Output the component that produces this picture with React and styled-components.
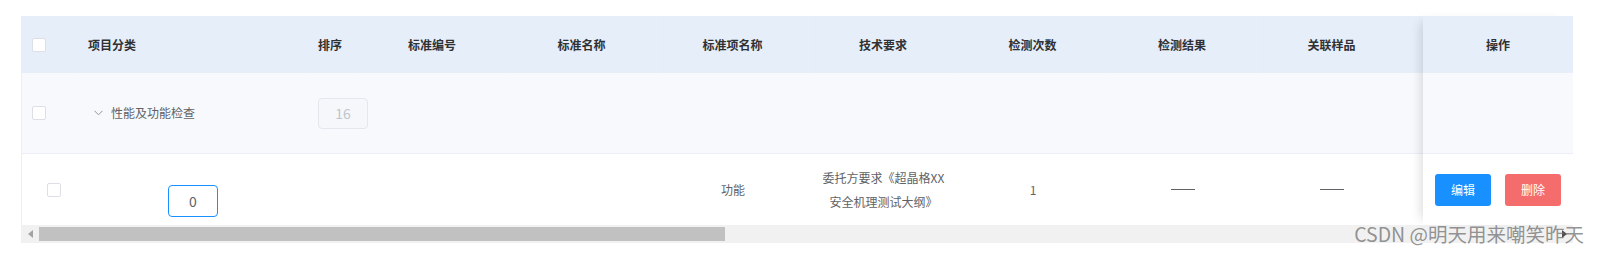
import React from "react";
import styled, { createGlobalStyle } from "styled-components";

const Global = createGlobalStyle`
  html, body { margin: 0; padding: 0; background: #fff; }
  body { font-family: "Noto Sans CJK SC", "Noto Sans", sans-serif; }
  * { box-sizing: border-box; }
`;

const COLS = "56px 230px 50px 149px 150px 152px 149px 150px 149px 150px 150px 150px";

const Page = styled.div`
  position: relative;
  width: 1600px;
  height: 254px;
  padding: 16px 27px 0 21px;
`;

const Table = styled.div`
  display: flex;
  flex-direction: column;
  width: 1552px;
`;

const Body = styled.div`
  display: flex;
  border-left: 1px solid #ebeef5;
`;

const ScrollPane = styled.div`
  flex: 1;
  min-width: 0;
  overflow: hidden;
`;

const FixedPane = styled.div`
  width: 150px;
  flex: none;
  position: relative;
  z-index: 1;
  box-shadow: -8px 0 10px -6px rgba(0, 0, 0, 0.14);
  background: #fff;
`;

const Row = styled.div`
  display: grid;
  grid-template-columns: ${(p) => p.$cols || COLS};
  width: max-content;
  height: ${(p) => p.$h}px;
  background: ${(p) => p.$bg};
  border-bottom: ${(p) => (p.$border ? "1px solid #ebeef5" : "none")};
`;

const FixedRow = styled.div`
  display: flex;
  align-items: center;
  justify-content: center;
  gap: 14px;
  height: ${(p) => p.$h}px;
  background: ${(p) => p.$bg};
  border-bottom: ${(p) => (p.$border ? "1px solid #ebeef5" : "none")};
`;

const HeadCell = styled.div`
  display: flex;
  align-items: center;
  justify-content: ${(p) => (p.$left ? "flex-start" : "center")};
  padding-left: ${(p) => (p.$left ? p.$pl ?? 10 : 0)}px;
  border-right: 1px solid #e9eff9;
  font-size: 12px;
  font-weight: 700;
  color: #303133;
  white-space: nowrap;
`;

const FixedHeadText = styled.span`
  font-size: 12px;
  font-weight: 700;
  color: #303133;
`;

const Cell = styled.div`
  display: flex;
  align-items: ${(p) => p.$align || "center"};
  justify-content: ${(p) => (p.$left ? "flex-start" : "center")};
  padding-left: ${(p) => (p.$left ? p.$pl ?? 10 : 0)}px;
  padding-top: ${(p) => p.$pt ?? 0}px;
  font-size: 12px;
  color: #606266;
  text-align: center;
  line-height: 24px;
  white-space: nowrap;
  min-width: 0;
`;

const Checkbox = styled.span`
  display: inline-block;
  flex: none;
  width: 14px;
  height: 14px;
  border: 1px solid #dcdfe6;
  border-radius: 2px;
  background: #fff;
`;

const Chevron = styled.svg`
  width: 9px;
  height: 6px;
  margin: 0 8px 0 6px;
  flex: none;
`;

const NumInput = styled.div`
  flex: none;
  width: 50px;
  height: ${(p) => (p.$disabled ? 31 : 32)}px;
  display: flex;
  align-items: center;
  justify-content: center;
  border-radius: 4px;
  font-size: 14px;
  border: 1px solid ${(p) => (p.$disabled ? "#e4e7ed" : "#1890ff")};
  background: ${(p) => (p.$disabled ? "#f5f7fa" : "#fff")};
  color: ${(p) => (p.$disabled ? "#c0c4cc" : "#606266")};
  position: relative;
  z-index: 1;
`;

const Dash = styled.span`
  display: inline-block;
  width: 24px;
  height: 1px;
  background: #606266;
`;

const Button = styled.button`
  width: 56px;
  height: 32px;
  border: none;
  border-radius: 3px;
  font-family: inherit;
  font-size: 12px;
  color: #fff;
  background: ${(p) => p.$bg};
  padding: 0;
`;

const Scrollbar = styled.div`
  display: flex;
  align-items: center;
  height: 18px;
  background: #f1f1f1;
`;

const ArrowBtn = styled.div`
  width: 18px;
  height: 18px;
  flex: none;
  display: flex;
  align-items: center;
  justify-content: center;
`;

const Track = styled.div`
  flex: 1;
  height: 100%;
  display: flex;
  align-items: center;
`;

const Thumb = styled.div`
  height: 14px;
  background: #c1c1c1;
`;

const Watermark = styled.div`
  position: absolute;
  right: 16px;
  top: 221px;
  font-family: "Noto Sans CJK SC", "Noto Sans", sans-serif;
  font-size: 19.5px;
  line-height: 26px;
  color: rgba(120, 120, 120, 0.8);
  white-space: nowrap;
  pointer-events: none;
`;

const headers = [
  "标准编号",
  "标准名称",
  "标准项名称",
  "技术要求",
  "检测次数",
  "检测结果",
  "关联样品",
  "",
  "",
];

export default function App() {
  return (
    <Page>
      <Global />
      <Table>
        <Body>
          <ScrollPane>
            <Row $h={57} $bg="#e6eefa">
              <HeadCell $left $pl={10}>
                <Checkbox />
              </HeadCell>
              <HeadCell $left>项目分类</HeadCell>
              <HeadCell $left>排序</HeadCell>
              {headers.map((h, i) => (
                <HeadCell key={i}>{h}</HeadCell>
              ))}
            </Row>
            <Row $h={81} $bg="#f7f9fd" $border>
              <Cell $left $pl={10}>
                <Checkbox />
              </Cell>
              <Cell $left $pl={10}>
                <Chevron viewBox="0 0 9 6">
                  <polyline points="0.5,0.8 4.5,4.8 8.5,0.8" fill="none" stroke="#909399" strokeWidth="1" />
                </Chevron>
                性能及功能检查
              </Cell>
              <Cell $left $pl={10}>
                <NumInput $disabled>16</NumInput>
              </Cell>
              {headers.map((_, i) => (
                <Cell key={i} />
              ))}
            </Row>
            <Row $h={71} $bg="#fff">
              <Cell $left $pl={25}>
                <Checkbox />
              </Cell>
              <Cell $pt={23}>
                <NumInput>0</NumInput>
              </Cell>
              <Cell />
              <Cell />
              <Cell />
              <Cell>功能</Cell>
              <Cell>
                委托方要求《超晶格XX
                <br />
                安全机理测试大纲》
              </Cell>
              <Cell>1</Cell>
              <Cell>
                <Dash />
              </Cell>
              <Cell>
                <Dash />
              </Cell>
              <Cell />
              <Cell />
            </Row>
          </ScrollPane>
          <FixedPane>
            <FixedRow $h={57} $bg="#e6eefa">
              <FixedHeadText>操作</FixedHeadText>
            </FixedRow>
            <FixedRow $h={81} $bg="#f7f9fd" $border />
            <FixedRow $h={71} $bg="#fff">
              <Button $bg="#1890ff">编辑</Button>
              <Button $bg="#f56c6c">删除</Button>
            </FixedRow>
          </FixedPane>
        </Body>
        <Scrollbar>
          <ArrowBtn>
            <svg width="5" height="8" viewBox="0 0 5 8">
              <polygon points="5,0 0,4 5,8" fill="#a3a3a3" />
            </svg>
          </ArrowBtn>
          <Track>
            <Thumb style={{ width: "686px" }} />
          </Track>
          <ArrowBtn>
            <svg width="5" height="8" viewBox="0 0 5 8">
              <polygon points="0,0 5,4 0,8" fill="#505050" />
            </svg>
          </ArrowBtn>
        </Scrollbar>
      </Table>
      <Watermark>CSDN @明天用来嘲笑昨天</Watermark>
    </Page>
  );
}
